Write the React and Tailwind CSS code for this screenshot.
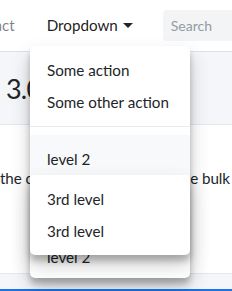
import React from "react";

export default function App() {
  return (
    <div
      className="relative w-[232px] h-[291px] overflow-hidden bg-[#f4f6f9] text-[#212529] text-[15.2px]"
      style={{ fontFamily: "Lato, 'Open Sans', sans-serif" }}
    >
      {/* navbar */}
      <nav className="h-[52px] bg-white border-b border-[#dee2e6] flex items-center whitespace-nowrap">
        <a className="ml-[-54px] px-4 text-[rgba(0,0,0,0.5)]">Contact</a>
        <a className="px-4 text-[rgba(0,0,0,0.9)] flex items-center">
          Dropdown
          <span className="inline-block ml-[5px] w-0 h-0 border-t-[5px] border-x-[5px] border-x-transparent border-t-[#212529]" />
        </a>
        <div className="ml-[14px] h-[31px] w-[120px] shrink-0 rounded-[4px] bg-[#f2f4f6] flex items-center pl-2 text-[14px] text-[#939ba2]">
          Search
        </div>
      </nav>

      {/* content header */}
      <div className="h-[72px] pl-[6px] flex items-center">
        <h1 className="text-[27px] leading-none tracking-[-0.8px]">3.0</h1>
      </div>

      {/* card */}
      <div className="h-[150px] bg-white border-t border-b border-[#e5e7eb] pt-[42px]">
        <p className="whitespace-nowrap tracking-[-0.1px]">the content area. Now use the bulk</p>
      </div>

      <div className="h-[15px]" />
      <div className="h-[2px] bg-[#1a73e8]" />

      {/* dropdown menu */}
      <div className="absolute left-[30px] top-[46px] w-[160px] h-[232px] bg-white rounded-[5px] shadow-[0_10px_20px_rgba(0,0,0,0.19),0_6px_6px_rgba(0,0,0,0.23)] pt-2 whitespace-nowrap">
        <div className="h-8 px-[17px] flex items-center">Some action</div>
        <div className="h-8 px-[17px] flex items-center">Some other action</div>
        <div className="my-2 border-t border-[#e9ecef]" />
        <div className="h-10 px-[17px] pt-3 bg-[#f8f9fa] leading-6">level 2</div>
        <div className="h-[66px]" />
        <div className="h-8 px-[17px] flex items-center">level 2</div>

        {/* 3rd level submenu */}
        <div className="absolute left-0 top-[129px] w-[160px] h-[80px] bg-white rounded-[5px] shadow-[0_10px_20px_rgba(0,0,0,0.19),0_6px_6px_rgba(0,0,0,0.23)] py-2">
          <div className="h-8 px-[17px] flex items-center">3rd level</div>
          <div className="h-8 px-[17px] flex items-center">3rd level</div>
        </div>
      </div>
    </div>
  );
}
